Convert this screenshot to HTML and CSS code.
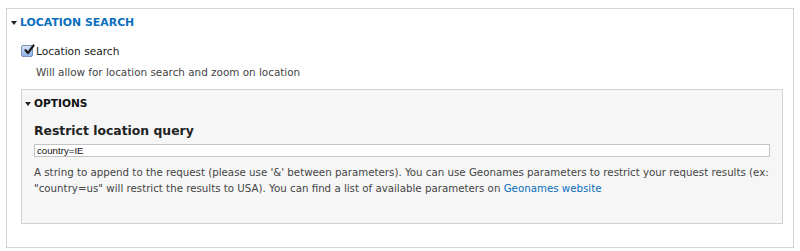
FILE: index.html
```html
<!DOCTYPE html>
<html>
<head>
<meta charset="utf-8">
<link rel="stylesheet" href="styles.css">
</head>
<body>
<fieldset class="outer">
  <div class="legend"><span class="tri"></span>LOCATION SEARCH</div>
  <div class="outer-body">
    <label class="check"><span class="box"><svg width="12" height="12" viewBox="0 0 12 12"><path d="M2.5 6.2 L5 9 L10.5 1.5" fill="none" stroke="#1a1a1a" stroke-width="2.2" stroke-linecap="round" stroke-linejoin="round"/></svg></span>Location search</label>
    <div class="desc">Will allow for location search and zoom on location</div>
    <fieldset class="inner">
      <div class="legend2"><span class="tri"></span>OPTIONS</div>
      <div class="inner-body">
        <div class="field-label">Restrict location query</div>
        <div class="input">country=IE</div>
        <div class="help"><span class="nowrap">A string to append to the request (please use '&amp;' between parameters). You can use Geonames parameters to restrict your request results (ex:</span><br>"country=us" will restrict the results to USA). You can find a list of available parameters on <a href="#">Geonames website</a></div>
      </div>
    </fieldset>
  </div>
</fieldset>
</body>
</html>
```
FILE: styles.css
```css
html, body { margin: 0; padding: 0; background: #fff; }
body {
  font-family: "DejaVu Sans", "Open Sans", sans-serif;
  font-size: 10.4px;
  color: #333;
  padding: 8px 6px 0 6px;
}
.outer {
  margin: 0;
  padding: 0;
  border: 1px solid #d6d6d6;
  height: 240px;
  box-sizing: border-box;
  min-width: 0;
}
.legend {
  display: flex;
  align-items: center;
  height: 27px;
  padding-left: 4px;
  color: #0a6fbd;
  font-weight: bold;
  font-size: 10.9px;
}
.tri {
  width: 0; height: 0;
  border-left: 3px solid transparent;
  border-right: 3px solid transparent;
  border-top: 4px solid #222;
  margin-right: 3px;
  margin-top: 1px;
}
.outer-body { padding: 8px 10px 0 14px; }
.check { display: flex; align-items: center; color: #222; height: 14px; font-size: 10.6px; }
.box {
  width: 10px; height: 10px;
  border: 1px solid #7a8fb5;
  border-radius: 2px;
  background: linear-gradient(#d6e4f8, #8fb2e6);
  margin-right: 3px;
  position: relative;
}
.box svg { position: absolute; left: 1px; top: -2px; }
.desc { padding-left: 15px; margin-top: 6px; line-height: 16px; color: #444; }
.inner {
  margin: 9px 0 0 0;
  padding: 0;
  border: 1px solid #d2d2d2;
  background: #f6f6f6;
  height: 135px;
  box-sizing: border-box;
  min-width: 0;
}
.legend2 {
  display: flex;
  align-items: center;
  height: 26px;
  padding-left: 3px;
  font-weight: bold;
  font-size: 10.6px;
  color: #111;
}
.inner-body { padding: 7px 12px 0 12px; }
.field-label { font-weight: bold; font-size: 12.4px; line-height: 16px; color: #222; }
.input {
  margin-top: 5px;
  height: 13px;
  box-sizing: border-box;
  border: 1px solid #c4c4c4;
  background: #fff;
  font-family: "Liberation Sans", Arial, sans-serif;
  font-size: 9.7px;
  color: #111;
  line-height: 11px;
  padding-left: 2px;
}
.help { margin-top: 7px; line-height: 16px; color: #444; font-size: 10.25px; }
.nowrap { white-space: nowrap; }
.help a { color: #0a6fbd; text-decoration: none; }
```
